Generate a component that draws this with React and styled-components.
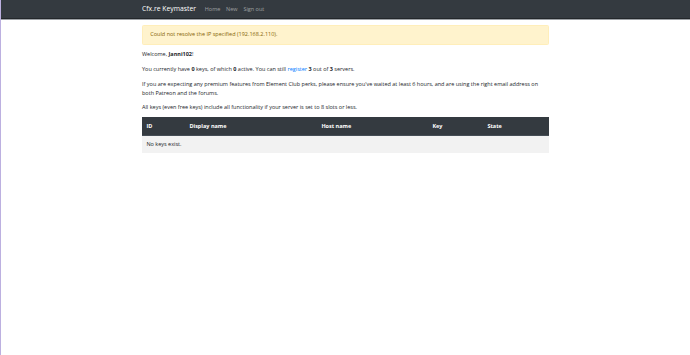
import React from 'react';
import styled, { createGlobalStyle } from 'styled-components';

const COLORS = {
  dark: '#343a40',
  text: '#212529',
  link: '#007bff',
};

const GlobalStyle = createGlobalStyle`
  html, body {
    margin: 0;
    padding: 0;
    background: #fff;
  }
  body {
    font-family: 'Open Sans', 'Noto Sans', sans-serif;
    font-size: 5.5px;
    line-height: 8.8px;
    color: ${COLORS.text};
  }
`;

const Page = styled.div`
  min-height: 355px;
  box-sizing: border-box;
  border-left: 1px solid #bcb0e0;
`;

const Navbar = styled.nav`
  height: 18px;
  background: ${COLORS.dark};
  border-bottom: 1px solid #23272b;
  box-shadow: 0 1px 0 #9ea2a7;
`;

const Container = styled.div`
  width: 407px;
  margin: 0 auto;
`;

const NavInner = styled(Container)`
  height: 100%;
  display: flex;
  align-items: center;
`;

const Brand = styled.a`
  font-size: 6.8px;
  color: #fff;
  margin-right: 5.9px;
  text-decoration: none;
`;

const NavLink = styled.a`
  color: rgba(255, 255, 255, 0.5);
  padding: 0 2.9px;
  text-decoration: none;
`;

const Main = styled(Container)`
  padding-top: 6px;
`;

const Alert = styled.div`
  background: #fff3cd;
  border: 0.4px solid #ffeeba;
  color: #856404;
  padding: 4.4px 7.3px;
  border-radius: 1.5px;
  margin-bottom: 5.9px;
`;

const Para = styled.p`
  margin: 0 0 5.9px;
  &:last-of-type {
    margin-bottom: 5px;
  }
`;

const Link = styled.a`
  color: ${COLORS.link};
  text-decoration: none;
`;

const Table = styled.table`
  width: 407px;
  border-collapse: collapse;
  table-layout: fixed;
`;

const Th = styled.th`
  box-sizing: border-box;
  width: ${(p) => p.w}px;
  text-align: left;
  background: ${COLORS.dark};
  color: #fff;
  font-weight: 700;
  padding: 4.6px 4.4px;
  border-bottom: 0.8px solid #454d55;
`;

const Td = styled.td`
  background: #f2f2f2;
  padding: 4px 4.4px;
`;

export default function App() {
  return (
    <Page>
      <GlobalStyle />
      <Navbar>
        <NavInner>
          <Brand href="#">Cfx.re Keymaster</Brand>
          <NavLink href="#">Home</NavLink>
          <NavLink href="#">New</NavLink>
          <NavLink href="#">Sign out</NavLink>
        </NavInner>
      </Navbar>
      <Main>
        <Alert>Could not resolve the IP specified (192.168.2.110).</Alert>
        <Para>
          Welcome, <b>Janni102</b>!
        </Para>
        <Para>
          You currently have <b>0</b> keys, of which <b>0</b> active. You can still{' '}
          <Link href="#">register</Link> <b>3</b> out of <b>3</b> servers.
        </Para>
        <Para>
          If you are expecting any premium features from Element Club perks, please ensure you've
          waited at least 6 hours, and are using the right email address on both Patreon and the
          forums.
        </Para>
        <Para>
          All keys (even free keys) include all functionality if your server is set to 8 slots or
          less.
        </Para>
        <Table>
          <thead>
            <tr>
              <Th w={43}>ID</Th>
              <Th w={132}>Display name</Th>
              <Th w={111}>Host name</Th>
              <Th w={55}>Key</Th>
              <Th w={66}>State</Th>
            </tr>
          </thead>
          <tbody>
            <tr>
              <Td colSpan={5}>No keys exist.</Td>
            </tr>
          </tbody>
        </Table>
      </Main>
    </Page>
  );
}
